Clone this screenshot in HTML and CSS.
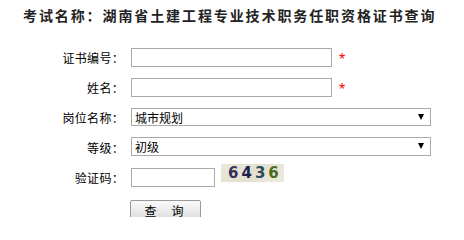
FILE: index.html
```html
<!DOCTYPE html>
<html lang="zh-CN">
<head>
<meta charset="utf-8">
<title>证书查询</title>
<link rel="stylesheet" href="styles.css">
</head>
<body>
<div class="title">考试名称：湖南省土建工程专业技术职务任职资格证书查询</div>
<form class="form">
  <label class="label">证书编号：</label>
  <div class="field"><input class="text wide" type="text"><span class="req">*</span></div>

  <label class="label">姓名：</label>
  <div class="field"><input class="text wide" type="text"><span class="req">*</span></div>

  <label class="label">岗位名称：</label>
  <div class="field">
    <div class="select-wrap">
      <select class="select"><option>城市规划</option></select>
      <span class="arrow"></span>
    </div>
  </div>

  <label class="label">等级：</label>
  <div class="field">
    <div class="select-wrap tall">
      <select class="select"><option>初级</option></select>
      <span class="arrow"></span>
    </div>
  </div>

  <label class="label">验证码：</label>
  <div class="field">
    <input class="text short" type="text">
    <span class="captcha"><span class="d1">6</span><span class="d2">4</span><span class="d3">3</span><span class="d4">6</span></span>
  </div>

  <span class="label"></span>
  <div class="field">
    <button class="btn" type="button"><span>查</span><span>询</span></button>
  </div>
</form>
</body>
</html>
```

FILE: styles.css
```css
html, body {
  margin: 0;
  padding: 0;
  background: #fff;
}
body {
  font-family: "Noto Sans CJK SC", "Liberation Sans", sans-serif;
  font-size: 12px;
  color: #000;
}
.title {
  height: 30px;
  line-height: 30px;
  padding-left: 23px;
  font-size: 14px;
  font-weight: bold;
  color: #222;
  letter-spacing: 1.9px;
  white-space: nowrap;
}
.form {
  margin-top: 18px;
  display: grid;
  grid-template-columns: 124px 1fr;
  column-gap: 7px;
  grid-auto-rows: 19px;
  row-gap: 11px;
}
.label {
  text-align: right;
  line-height: 19px;
  font-size: 12px;
  letter-spacing: 0.3px;
}
.field {
  display: flex;
  align-items: center;
  height: 19px;
}
.text {
  box-sizing: border-box;
  height: 19px;
  border: 1px solid #a9a9a9;
  background: #fff;
  margin: 0;
  padding: 0 3px;
  font-size: 12px;
  outline: none;
}
.wide { width: 201px; }
.short { width: 84px; }
.req {
  color: #f00;
  margin-left: 7px;
  font-family: "Liberation Sans", sans-serif;
  font-size: 16px;
  font-weight: normal;
  line-height: 19px;
  padding-top: 4px;
}
.select-wrap {
  position: relative;
  width: 300px;
  height: 18px;
  align-self: flex-start;
}
.select-wrap.tall { height: 19px; margin-top: -1px; }
.select {
  -webkit-appearance: none;
  appearance: none;
  box-sizing: border-box;
  width: 300px;
  height: 100%;
  margin: 0;
  border: 1px solid #a9a9a9;
  border-radius: 0;
  background: #fff;
  padding: 0 0 0 3px;
  font-family: "Noto Sans CJK SC", "Liberation Sans", sans-serif;
  font-size: 12px;
  color: #000;
  outline: none;
}
.arrow {
  position: absolute;
  right: 7px;
  top: 6px;
  width: 0;
  height: 0;
  border-left: 3.5px solid transparent;
  border-right: 3.5px solid transparent;
  border-top: 6px solid #000;
}
.captcha {
  align-self: flex-start;
  margin-top: -4px;
  margin-left: 6px;
  width: 63px;
  height: 18px;
  box-sizing: border-box;
  padding-left: 7px;
  background: linear-gradient(135deg, #e9e8da 0%, #e2e1cf 50%, #ebeadf 100%);
  font-family: "DejaVu Sans", "Liberation Sans", sans-serif;
  font-size: 15px;
  font-weight: bold;
  line-height: 18px;
  letter-spacing: 3px;
  white-space: nowrap;
}
.d1 { color: #3b2f5c; }
.d2 { color: #1c2150; }
.d3 { color: #2c4c5e; }
.d4 { color: #4c6b1e; }
.btn {
  box-sizing: border-box;
  align-self: flex-start;
  width: 71px;
  height: 21px;
  margin: 2px 0 0 -1px;
  border: 1px solid #9a9a9a;
  border-radius: 2px;
  background: linear-gradient(#fafafa, #dcdcdc);
  display: flex;
  justify-content: center;
  align-items: center;
  gap: 15px;
  padding: 0 3px 0 0;
  font-family: "Noto Sans CJK SC", "Liberation Sans", sans-serif;
  font-size: 12px;
  line-height: 19px;
  color: #000;
}
```
